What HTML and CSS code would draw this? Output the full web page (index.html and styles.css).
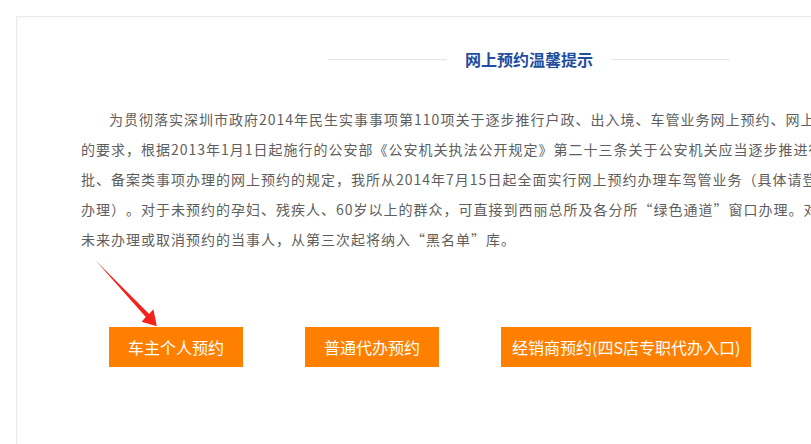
FILE: index.html
```html
<!DOCTYPE html>
<html lang="zh-CN">
<head>
  <meta charset="UTF-8" />
  <title>网上预约温馨提示</title>
  <link rel="stylesheet" href="styles.css">
</head>
<body>

  <div class="card">
    <div class="tip-title">
      <span class="rule"></span>
      <h2>网上预约温馨提示</h2>
      <span class="rule"></span>
    </div>

    <p class="notice">
      为贯彻落实深圳市政府2014年民生实事事项第110项关于逐步推行户政、出入境、车管业务网上预约、网上审批<br>
      的要求，根据2013年1月1日起施行的公安部《公安机关执法公开规定》第二十三条关于公安机关应当逐步推进行政审<br>
      批、备案类事项办理的网上预约的规定，我所从2014年7月15日起全面实行网上预约办理车驾管业务（具体请登录<br>
      办理）。对于未预约的孕妇、残疾人、60岁以上的群众，可直接到西丽总所及各分所“绿色通道”窗口办理。对预约后<br>
      未来办理或取消预约的当事人，从第三次起将纳入“黑名单”库。
    </p>

    <div class="actions">
      <a class="btn" href="#">车主个人预约</a>
      <a class="btn" href="#">普通代办预约</a>
      <a class="btn btn-wide" href="#">经销商预约(四S店专职代办入口)</a>
    </div>

    <svg class="pointer" width="64" height="68" viewBox="0 0 64 68">
      <polygon points="1,1 54.2,54 58.4,49.2 61.8,66.2 46.6,61.8 50.8,57" fill="#f5221b" />
    </svg>
  </div>

</body>
</html>
```

FILE: styles.css
```css
html, body {
  overflow: hidden;
}

body {
  font-family: "Noto Sans CJK SC", "Noto Sans", sans-serif;
  background: #fff;
  margin: 0;
  padding: 0;
  text-spacing-trim: space-all;
}

.card {
  position: relative;
  width: 1024px;
  height: 600px;
  margin: 16px 0 0 16px;
  padding-top: 30px;
  border: 1px solid #e9e9e9;
  box-shadow: inset 5px 5px 4px -4px #f6f6f6;
}

.tip-title {
  display: flex;
  align-items: center;
  justify-content: center;
  height: 24px;
}

.tip-title h2 {
  margin: 0 18px;
  font-size: 16px;
  line-height: 24px;
  font-weight: bold;
  color: #1f4e9e;
}

.rule {
  width: 119px;
  height: 1px;
  background: #e6e6e6;
}

.notice {
  margin: 33px 0 0;
  padding: 0 64px;
  font-size: 14px;
  letter-spacing: 1px;
  line-height: 30px;
  color: #5e5e5e;
  text-indent: 28px;
  white-space: nowrap;
}

.actions {
  display: flex;
  gap: 62px;
  margin-top: 73px;
  padding-left: 92px;
}

.btn {
  display: block;
  height: 40px;
  line-height: 40px;
  padding: 0 19px;
  background-color: #ff8000;
  color: #fff;
  font-size: 16px;
  text-decoration: none;
}

.btn-wide {
  padding: 0 11px;
}

.pointer {
  position: absolute;
  left: 78px;
  top: 243px;
}
```
